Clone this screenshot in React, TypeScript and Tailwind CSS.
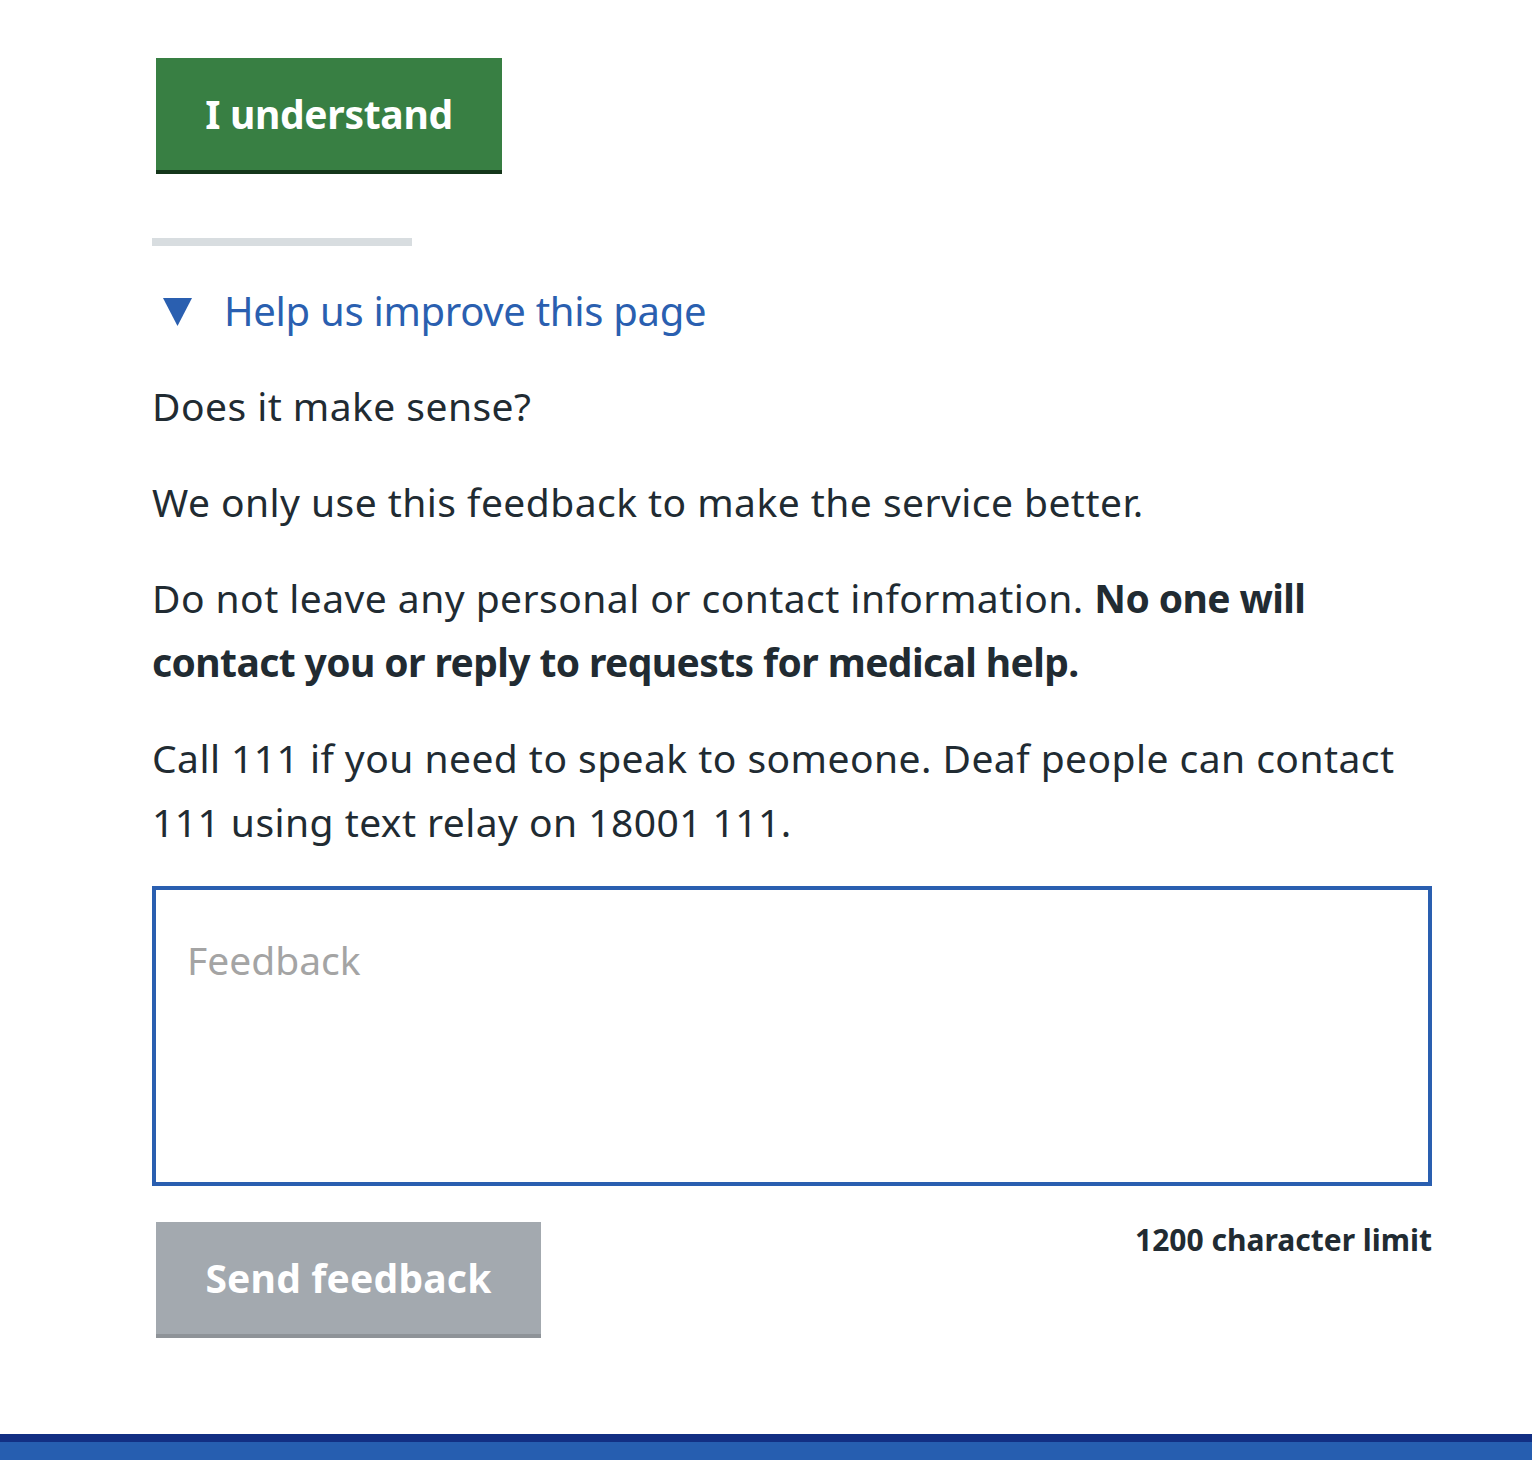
import React from "react";

export default function App() {
  return (
    <div className="min-h-[1460px] w-[1532px] bg-white flex flex-col" style={{ fontFamily: '"Noto Sans", "Open Sans", sans-serif' }}>
      <main className="flex-1 pl-[152px] pr-[100px] pt-[58px]">
        <button className="ml-[4px] h-[116px] w-[346px] bg-[#387f43] border-b-[4px] border-[#14361a] text-white font-bold text-[39px] tracking-[-0.3px]">
          I understand
        </button>
        <div className="mt-[64px] h-[8px] w-[260px] bg-[#d8dde0]" />
        <div className="mt-[33px] flex items-center h-[64px] text-[#2a5fb0] text-[40px] tracking-[-0.3px]">
          <svg width="29" height="28" viewBox="0 0 29 28" className="ml-[11px] mr-[32px] mt-[2px]">
            <polygon points="0,0 29,0 14.5,28" fill="#2a5fb0" />
          </svg>
          <span>Help us improve this page</span>
        </div>
        <div className="mt-[31px] text-[#212b32] text-[39px] leading-[64px] tracking-[0.45px] flex flex-col gap-[32px]">
          <p>Does it make sense?</p>
          <p>We only use this feedback to make the service better.</p>
          <p>
            Do not leave any personal or contact information.{" "}
            <strong className="font-bold tracking-[-0.6px]">No one will contact you or reply to requests for medical help.</strong>
          </p>
          <p>Call 111 if you need to speak to someone. Deaf people can contact 111 using text relay on 18001 111.</p>
        </div>
        <textarea
          placeholder="Feedback"
          className="mt-[32px] block w-[1280px] h-[300px] border-[4px] border-[#2a5fb0] px-[31px] py-[38px] text-[39px] leading-[64px] resize-none outline-none placeholder:text-[#a4a4a4]"
        />
        <div className="mt-[36px] flex justify-between items-start w-[1280px]">
          <button className="ml-[4px] h-[116px] w-[385px] bg-[#a3a9af] border-b-[4px] border-[#8e9398] text-white font-bold text-[39px] tracking-[0.2px]">
            Send feedback
          </button>
          <span className="text-[30px] font-bold text-[#212b32] leading-[40px] mt-[-2px]">1200 character limit</span>
        </div>
      </main>
      <div className="h-[8px] bg-[#122f83]" />
      <div className="h-[18px] bg-[#265eb0]" />
    </div>
  );
}
